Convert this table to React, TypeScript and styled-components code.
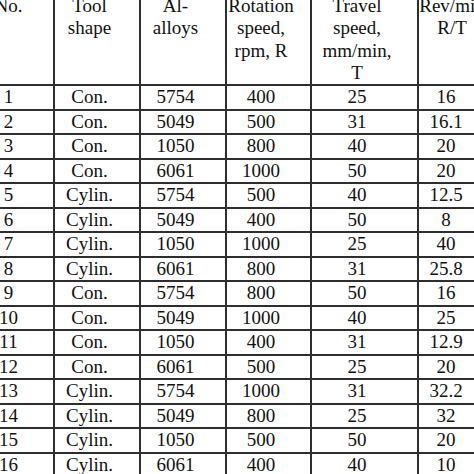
import React from "react";
import styled, { createGlobalStyle } from "styled-components";

const GlobalStyle = createGlobalStyle`
  html, body {
    margin: 0;
    padding: 0;
    background: #fff;
  }
`;

const Sheet = styled.div`
  width: 474px;
  height: 474px;
  overflow: hidden;
  background: #fff;
`;

const DataTable = styled.table`
  border-collapse: collapse;
  table-layout: fixed;
  width: 511px;
  margin: -5px 0 0 -23px;
  font-family: "Liberation Serif", "Times New Roman", serif;
  font-size: 19px;
  color: #111;
`;

const HeadCell = styled.th<{ $tail?: boolean }>`
  border: 2px solid #2e2e2e;
  border-top: none;
  padding: ${(p) => (p.$tail ? "0 3px 0 0" : "0 15px 0 0")};
  vertical-align: top;
  text-align: center;
  font-weight: normal;
  line-height: 22.3px;
  white-space: nowrap;
`;

const Cell = styled.td`
  border: 2px solid #2e2e2e;
  padding: 0 15px 0 0;
  height: 22.5px;
  line-height: 22.5px;
  text-align: center;
  vertical-align: middle;
  white-space: nowrap;
`;

const widths = [76, 86, 86, 85, 107, 71];

const headers: string[][] = [
  ["No."],
  ["Tool", "shape"],
  ["Al-", "alloys"],
  ["Rotation", "speed,", "rpm, R"],
  ["Travel", "speed,", "mm/min,", "T"],
  ["Rev/min", "R/T"],
];

const rows: string[][] = [
  ["1", "Con.", "5754", "400", "25", "16"],
  ["2", "Con.", "5049", "500", "31", "16.1"],
  ["3", "Con.", "1050", "800", "40", "20"],
  ["4", "Con.", "6061", "1000", "50", "20"],
  ["5", "Cylin.", "5754", "500", "40", "12.5"],
  ["6", "Cylin.", "5049", "400", "50", "8"],
  ["7", "Cylin.", "1050", "1000", "25", "40"],
  ["8", "Cylin.", "6061", "800", "31", "25.8"],
  ["9", "Con.", "5754", "800", "50", "16"],
  ["10", "Con.", "5049", "1000", "40", "25"],
  ["11", "Con.", "1050", "400", "31", "12.9"],
  ["12", "Con.", "6061", "500", "25", "20"],
  ["13", "Cylin.", "5754", "1000", "31", "32.2"],
  ["14", "Cylin.", "5049", "800", "25", "32"],
  ["15", "Cylin.", "1050", "500", "50", "20"],
  ["16", "Cylin.", "6061", "400", "40", "10"],
];

export default function App() {
  return (
    <>
      <GlobalStyle />
      <Sheet>
        <DataTable>
          <colgroup>
            {widths.map((w, i) => (
              <col key={i} style={{ width: w }} />
            ))}
          </colgroup>
          <thead>
            <tr>
              {headers.map((lines, i) => (
                <HeadCell key={i} $tail={i === headers.length - 1}>
                  {lines.map((line, j) => (
                    <React.Fragment key={j}>
                      {j > 0 && <br />}
                      {line}
                    </React.Fragment>
                  ))}
                </HeadCell>
              ))}
            </tr>
          </thead>
          <tbody>
            {rows.map((row, i) => (
              <tr key={i}>
                {row.map((value, j) => (
                  <Cell key={j}>{value}</Cell>
                ))}
              </tr>
            ))}
          </tbody>
        </DataTable>
      </Sheet>
    </>
  );
}
